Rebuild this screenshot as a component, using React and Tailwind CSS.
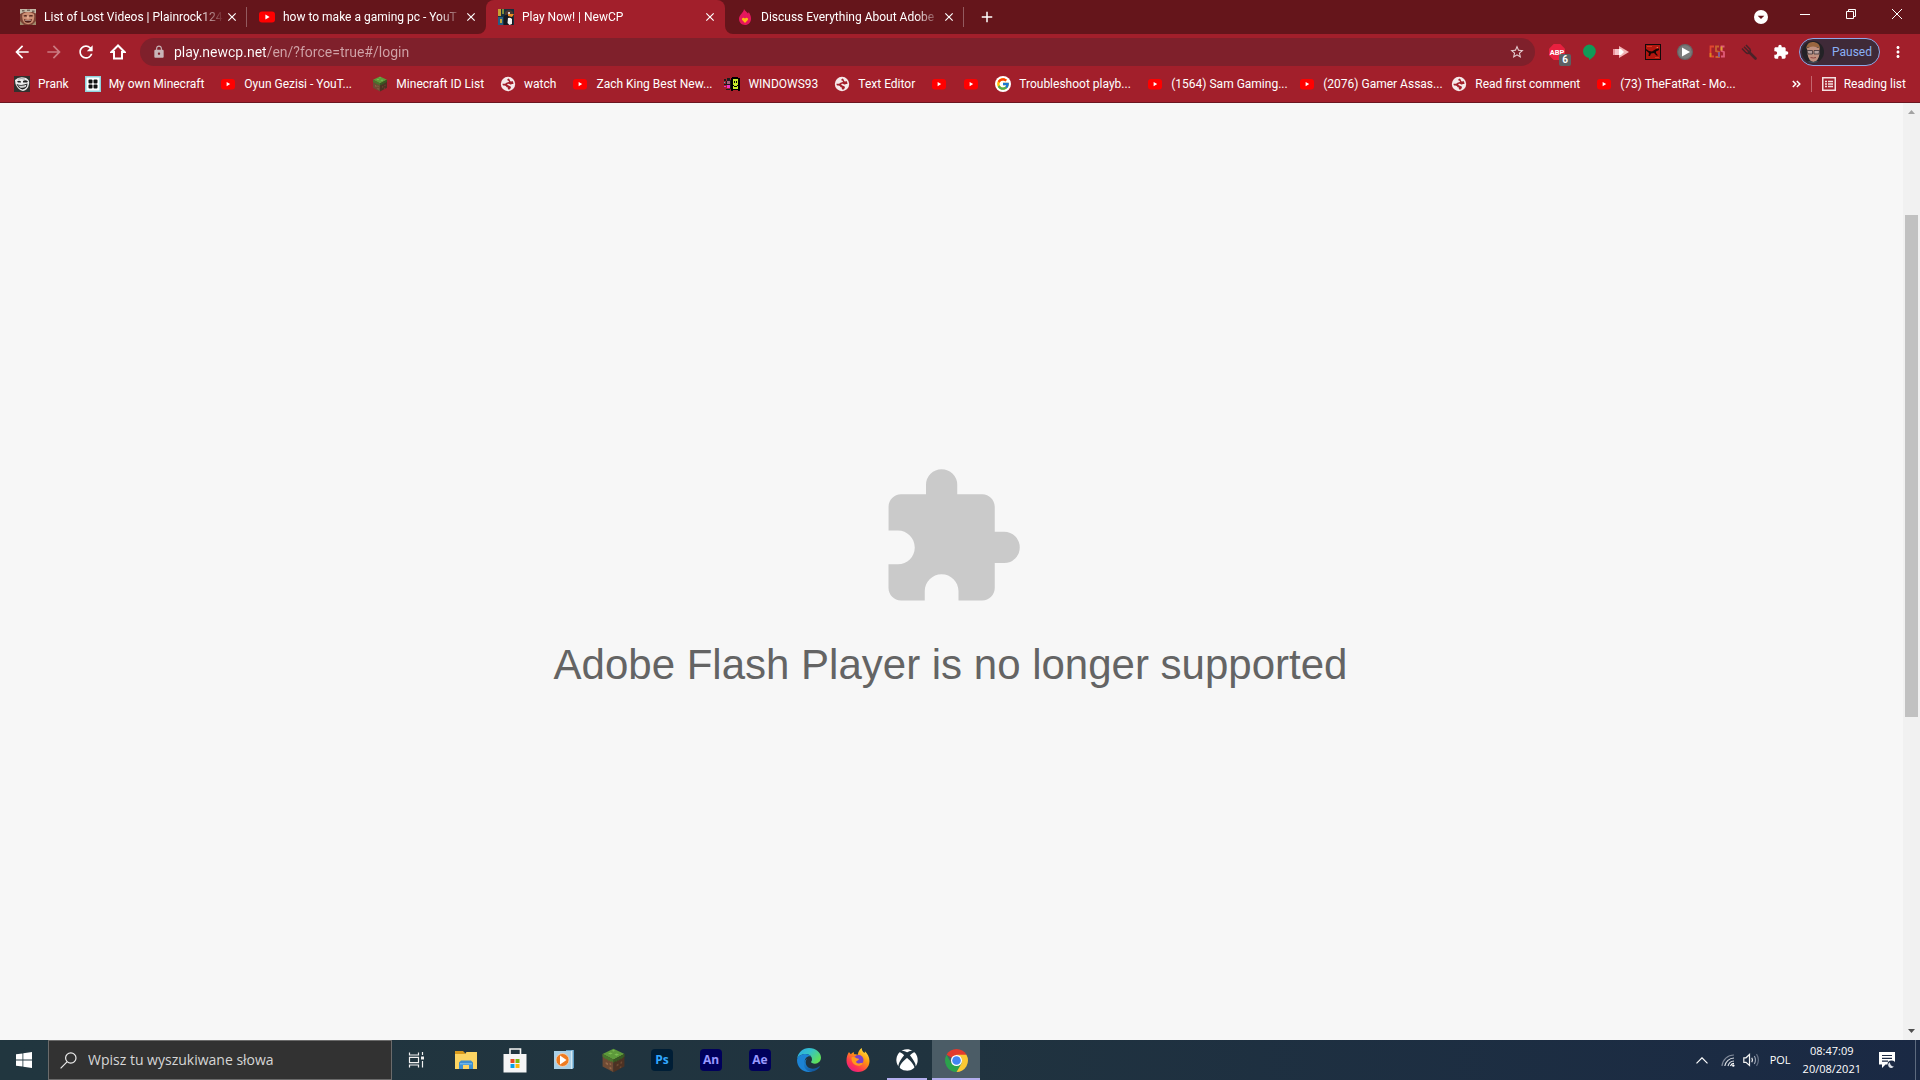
import React from 'react';
import {
  MdArrowBack,
  MdArrowForward,
  MdRefresh,
  MdLock,
  MdStarBorder,
  MdExtension,
  MdMoreVert,
  MdArrowDropDown,
  MdClose,
  MdAdd,
} from 'react-icons/md';
import { FaXbox } from 'react-icons/fa';
import { FcGoogle } from 'react-icons/fc';

/* Favicons, all on a 16px grid */

const YouTubeIcon = () => (
  <svg viewBox="0 0 16 16" className="size-4 shrink-0">
    <rect x="0" y="2.4" width="16" height="11.2" rx="3" fill="#ff0000" />
    <path d="M6.4 5.6v4.8L10.6 8z" fill="#fff" />
  </svg>
);

const YouTubeSmallIcon = () => (
  <svg viewBox="0 0 16 16" className="size-4 shrink-0">
    <rect x="1" y="3" width="14" height="10.4" rx="3" fill="#ff0000" />
    <path d="M6.6 6v4.2L10.2 8.1z" fill="#fff" />
  </svg>
);

const GlobeIcon = () => (
  <svg viewBox="0 0 16 16" className="size-4 shrink-0">
    <circle cx="8" cy="8" r="7.2" fill="#f6e9ea" />
    <path
      d="M8.8 2.4c-1.6.5-2 1.500-1 2.200 1 .5 1.700.7.8 1.500-.9.600-2 .3-2.800 1.100-.5.600-1.500.5-3.300.5 0 1 .3 1.500.7 1.900 1.600 0 2.600.1 3 .9.200.8.9.6 1.500 1.100.3.700-.2 1.600.6 2 .9 0 1.700-.4 2.200-1.200.5-.9.700-1.600-.2-2.100-1.100-.3-1.700-.9-2.700-1.300-.6-.4-.4-1.100.4-1.200 1-.1 1.500.5 2.300.6 1 .1 1.300-.5 2.100-.5h1.100c-.1-1.100-.4-2-1-2.800-.7.400-1.500.5-2 .1-.7-.6-.6-1.700-1.700-2.800z"
      fill="#a3202c"
    />
  </svg>
);

const FaceIcon = () => (
  <svg viewBox="0 0 16 16" className="size-4 shrink-0">
    <rect width="16" height="16" fill="#7b4335" />
    <path d="M0 0h16v4.500L13 3H4L0 5z" fill="#c4b7a6" />
    <path d="M2 1h2.500v1.500H2zM7 .5h3v1.500H7zM12 1.500h2.500V3H12z" fill="#77665a" />
    <path d="M2.500 5q5.500-4 11.500 0 1 5-1.500 8.500Q8 17 4 13.500 1.500 10 2.500 5z" fill="#cd8f74" />
    <path d="M3.500 6.500q2-1 3.500 0v1H4zM9 6.500q2-1 4 0l-.5 1H9z" fill="#4a2018" />
    <path d="M7 7h1.500l.8 2.500H6.500z" fill="#e2aa90" />
    <path d="M4 10q4 2 8 0l-1 3q-3 1.500-6 0z" fill="#501a16" />
    <path d="M5 10.700q3 1 6 0l-.5 1h-5z" fill="#e8d5c8" />
    <path d="M0 12l4 4H0zM16 12l-4 4h4z" fill="#a08a6c" />
  </svg>
);

const PenguinIcon = () => (
  <svg viewBox="0 0 16 16" className="size-4 shrink-0">
    <rect width="16" height="16" fill="#17303c" />
    <path d="M0 0h3v7H0z" fill="#c9a032" />
    <path d="M4 0h2v5H4z" fill="#7c8a3a" />
    <path d="M0 8h5v8H0z" fill="#275d83" />
    <path d="M2 10h2v4H2z" fill="#c2a43a" />
    <path d="M7 3q4-4 8 0v3H7z" fill="#4c3730" />
    <path d="M6 7q4-3 9 0v9H6z" fill="#14181f" />
    <path d="M10 9q2.500-1 4 1v5l-2.500 1-2-2z" fill="#f2f2f2" />
    <path d="M10 5h6l-2 3-4-1z" fill="#ec8a25" />
    <circle cx="11" cy="4" r="1" fill="#fff" />
  </svg>
);

const FlameIcon = () => (
  <svg viewBox="0 0 16 16" className="size-4 shrink-0">
    <path d="M7 0c1 2 2.500 2.800 4 4.500.4-.5.600-1 .6-1.500 1.500 2 2.400 4.200 2.400 6.500C14 13.500 11.500 16 8 16s-6-2.500-6-6.200C2 6 6.500 4 7 0z" fill="#e6175c" />
    <path d="M8 14l-2.800-3C4 9.300 6.500 7.800 8 9.500c1.500-1.700 4-.2 2.800 1.500z" fill="#fdb713" />
  </svg>
);

const TrollIcon = () => (
  <svg viewBox="0 0 16 16" className="size-4 shrink-0">
    <rect width="16" height="16" fill="#33302e" />
    <path d="M1 4Q5 0 12 2q4 2 3 6-1 6-6 7Q4 14 1.500 8z" fill="#ececec" />
    <path d="M3 5.500q2-1.500 4 0v1H4zM9 5q2.500-1.500 5 .5l-1 1H9z" fill="#222" />
    <path d="M2.500 8q5 2 11-.5 0 5-5 6-4-1-6-5.500z" fill="#222" />
    <path d="M4 9.200q4 1.500 8.500-.4l-1 2.200q-3.500 1.500-5.800.2z" fill="#f4f4f4" />
    <path d="M6 9.500v1.800M8 9.700v2M10 9.500v1.800" stroke="#444" strokeWidth=".4" />
    <path d="M4 3.200q3-1.400 7 0" stroke="#777" strokeWidth=".6" fill="none" />
  </svg>
);

const FourDotsIcon = () => (
  <svg viewBox="0 0 16 16" className="size-4 shrink-0">
    <rect width="16" height="16" fill="#8fd3dd" />
    <rect x="1.500" y="1.500" width="13" height="13" fill="#fff" />
    <rect x="3.500" y="3.500" width="4" height="4" rx="1" fill="#111" />
    <rect x="8.500" y="3.500" width="4" height="4" rx="1" fill="#111" />
    <rect x="3.500" y="8.500" width="4" height="4" rx="1" fill="#111" />
    <rect x="8.500" y="8.500" width="4" height="4" rx="1" fill="#111" />
  </svg>
);

const GrassBlockIcon = ({ className }) => (
  <svg viewBox="0 0 16 16" className={className}>
    <path d="M8 .5l7 3.300L8 7.500 1 3.800z" fill="#5d9a3b" />
    <path d="M1 3.800l7 3.700v8L1 11.800z" fill="#6f4b34" />
    <path d="M15 3.800L8 7.500v8l7-3.700z" fill="#4d3223" />
    <path d="M1 3.800l7 3.700v2l-1.500-1.300v1L5 7.400v1L3.500 6.500v1L1 5.500z" fill="#47782d" />
    <path d="M15 3.800L8 7.500v2l1.500-1.300v1L11 7.400v1l1.500-1.900v1L15 5.500z" fill="#365c22" />
    <path d="M3 9l1.500.8v1.300L3 10.300zM5.500 12l1.200.6v1.200l-1.200-.6zM5.500 9.500l1 .5v1l-1-.5z" fill="#95694a" />
    <path d="M10 10.500l1.200-.6v1.300l-1.200.6zM12.500 9l1-.5v1.300l-1 .5zM12 12l1-.5v1l-1 .5z" fill="#6e4a33" />
    <path d="M6 2.800l1.500.7-1.500.7-1.500-.7zM10 3.500l1.500.7-1.500.7-1.500-.7zM8 1.300l1 .5-1 .5-1-.5z" fill="#7abb50" />
  </svg>
);

const Windows93Icon = () => (
  <svg viewBox="0 0 16 16" className="size-4 shrink-0" shapeRendering="crispEdges">
    <path d="M8 1h6v1h2v13h-2v-1H9v1H7V2h1z" fill="#000" />
    <path d="M9 3h5v10H9z" fill="#c6ee2b" />
    <path d="M10 5h1v2h-1zM12 5h1v2h-1zM9 9h1v1H9zM13 9h1v1h-1zM10 10h3v1h-3z" fill="#000" />
    <path d="M0 3h2v2H0zM3 2h3v3H3zM2 5h1v3H2zM0 8h6v1H0zM2 13h4v1H2zM6 4h1v9H6z" fill="#1b1b1b" />
    <path d="M3 5h3v3H3z" fill="#a5607e" />
    <path d="M0 6h1v1H0z" fill="#39b6c8" />
    <path d="M3 9h3v3H3zM0 10h2v1H0z" fill="#f032c8" />
  </svg>
);

const GoogleIcon = () => (
  <span className="flex size-4 shrink-0 items-center justify-center rounded-full bg-white">
    <FcGoogle className="size-3.5" />
  </span>
);

/* Toolbar icons */

const HomeIcon = () => (
  <svg viewBox="0 0 16 16" className="size-4">
    <path d="M8 1.500L1.500 8H4v6.500h8V8h2.500z" fill="none" stroke="#fff" strokeWidth="2" />
  </svg>
);

const AbpIcon = () => (
  <span className="relative">
    <svg viewBox="0 0 16 16" className="size-4">
      <path d="M4.700 0h6.600L16 4.700v6.600L11.300 16H4.700L0 11.300V4.700z" fill="#e8203f" />
      <text x="8" y="10.500" textAnchor="middle" fontSize="7.500" fontWeight="700" fontFamily="Roboto, sans-serif" fill="#fff">ABP</text>
    </svg>
    <span className="absolute top-2.5 left-2.5 flex h-3 w-3 items-center justify-center rounded-xs bg-[#5c6063] text-[10px] leading-3 font-bold text-white">6</span>
  </span>
);

const BubbleIcon = () => (
  <svg viewBox="0 0 16 16" className="size-4">
    <path d="M8 .5a6.800 6.800 0 0 1 6.800 6.800c0 3.500-3 6.700-6.800 8.700v-2A6.800 6.800 0 0 1 8 .5z" fill="#109a58" />
  </svg>
);

const RecordIcon = () => (
  <svg viewBox="0 0 16 16" className="size-4">
    <path d="M0 5h2v6H0z" fill="#e8949b" />
    <path d="M2 5h5v6H2z" fill="#f6c5c9" />
    <path d="M6 2L16 8 6 14z" fill="#f2b3b5" />
    <path d="M6 5h2l3 3-3 3H6z" fill="#fff" />
  </svg>
);

const BeastIcon = () => (
  <svg viewBox="0 0 16 16" className="size-4">
    <rect width="16" height="16" fill="#12090a" />
    <rect x="1" y="1" width="14" height="14" fill="#b3160f" />
    <path d="M1 5l3 2 3 .5 4-2.500 3-.5v1.500l-3 1.500v1.500l2 2.500h-1.500L9 9 6 9.500 5 12H3.500l.5-3-3-2.500z" fill="#150606" />
    <path d="M2 2h5v1H2zM10 13h4v1h-4z" fill="#d43a20" />
    <path d="M11 4l2-1v1z" fill="#e7a46a" />
  </svg>
);

const PlayIcon = () => (
  <svg viewBox="0 0 16 16" className="size-4">
    <circle cx="8" cy="8" r="8" fill="#666" />
    <circle cx="8" cy="8" r="6.800" fill="#7b7b7b" />
    <path d="M5 3.500v9L13 8z" fill="#fff" />
  </svg>
);

const CssIcon = () => (
  <svg viewBox="0 0 16 16" className="size-4" fill="none" strokeWidth="1.800">
    <path d="M5 2.500H1.500v10H5" stroke="#e2452f" />
    <path d="M1.500 9v4" stroke="#d88a1e" />
    <path d="M10 2.500H7v4.500l3 1v5H6.500" stroke="#c9622f" />
    <path d="M10 8v5" stroke="#7f5a9c" />
    <path d="M15.500 2.500h-3v4.500l2.500 1v4.500h-3" stroke="#e05a78" />
    <path d="M12.500 2.500v4" stroke="#e0a030" />
  </svg>
);

const ForkIcon = () => (
  <svg viewBox="0 0 16 16" className="size-4" fill="none" stroke="#4a2228">
    <path d="M8 8l6.500 6.500" strokeWidth="2.600" strokeLinecap="round" />
    <path d="M1 4.500l4 4.200q2 1.500 3.500 0T9 5.200L5 1M3 2.700l5 5" strokeWidth="1.500" />
  </svg>
);

const Avatar = () => (
  <svg viewBox="0 0 22 22" className="size-[22px] rounded-full">
    <rect width="22" height="22" fill="#232226" />
    <path d="M4 8Q5 0 12 1q7 1 6 9l-2-4H6z" fill="#9a663f" />
    <path d="M5 7q6-3 12 0l.5 6q-1 7-6 8-5-1-6-8z" fill="#c0917f" />
    <path d="M5 9.500h5.500v3.500H6zM12 9.500h5.500L17 13h-5z" fill="#b6a09d" stroke="#3e3236" strokeWidth=".8" />
    <path d="M8.500 16.500q3 1 5.500 0" stroke="#8c4440" strokeWidth="1" fill="none" />
    <path d="M3 22q4-3 8-1 5-2 8 1z" fill="#45525e" />
  </svg>
);

const ReadingListIcon = () => (
  <svg viewBox="0 0 14 14" className="size-3.5" fill="none" stroke="#f3dfe1">
    <rect x=".75" y=".75" width="12.500" height="12.500" strokeWidth="1.500" />
    <path d="M3 4.500h2M3 7h2M3 9.500h2M6 4.500h5M6 7h5M6 9.500h5" strokeWidth="1.400" />
  </svg>
);

/* Taskbar icons */

const WindowsIcon = () => (
  <svg viewBox="0 0 16 16" className="size-4" fill="#fff">
    <path d="M0 2.300l6.500-.9v6.200H0zM7.300 1.300L16 0v7.600H7.300zM0 8.400h6.500v6.200L0 13.700zM7.300 8.400H16V16l-8.700-1.300z" />
  </svg>
);

const SearchIcon = () => (
  <svg viewBox="0 0 17 17" className="size-[17px]" fill="none" stroke="#ececec" strokeWidth="1.200">
    <circle cx="10.800" cy="6" r="5.200" />
    <path d="M7 9.800L.6 16.300" />
  </svg>
);

const TaskViewIcon = () => (
  <svg viewBox="0 0 17 16" className="h-4 w-[17px]" fill="none" stroke="#f1f1f1" strokeWidth="1.200">
    <path d="M1.500.5v2.500h9V.5M1.500 15.500V13h9v2.500M1.500 5.300h9v5.400h-9zM14.500 0v3M14.500 9v6.500" />
    <path d="M13 4.500h3v3h-3z" fill="#f1f1f1" stroke="none" />
  </svg>
);

const ExplorerIcon = () => (
  <svg viewBox="0 0 22 18" className="h-[18px] w-[22px]">
    <path d="M0 0h8l2 2v3H0z" fill="#d99a1c" />
    <path d="M0 3h10l1.500-2H22v17H0z" fill="#fcd462" />
    <path d="M4 18v-6.500L6 9.500h10l2 2V18h-4v-4H8v4z" fill="#3d8fd0" />
    <path d="M5 12h12v1.500H5z" fill="#6cb4e8" />
  </svg>
);

const StoreIcon = () => (
  <svg viewBox="0 0 24 25" className="h-[25px] w-6">
    <path d="M7 6V1h10.500v5" stroke="#f5f5f5" strokeWidth="1.600" fill="none" />
    <path d="M.5 6h23v18.500H.5z" fill="#f5f5f5" />
    <path d="M7.500 11h4v4h-4z" fill="#e64a24" />
    <path d="M12.500 11h4v4h-4z" fill="#7fb90b" />
    <path d="M7.500 16h4v4h-4z" fill="#05a0e8" />
    <path d="M12.500 16h4v4h-4z" fill="#fdb60a" />
  </svg>
);

const MediaPlayerIcon = () => (
  <svg viewBox="0 0 20 20" className="size-5">
    <path d="M12 0h8v18l-2 1H12z" fill="#5d9cc4" />
    <path d="M0 1h17v18H0z" fill="#a9cfe6" />
    <path d="M17 1l1.500-1v19L17 19z" fill="#d4e9f4" />
    <circle cx="8.500" cy="10" r="6.500" fill="#ee7b21" stroke="#f7d6b8" strokeWidth=".8" />
    <path d="M6 5.500v9L12.500 10z" fill="#fff" />
  </svg>
);

const AdobeTile = ({ label, className }) => (
  <span className={`flex h-[22px] w-[22px] items-center justify-center rounded-sm text-[12px] leading-3 font-bold ${className}`}>
    {label}
  </span>
);

const EdgeIcon = () => (
  <svg viewBox="0 0 24 24" className="size-6">
    <defs>
      <linearGradient id="edgeTop" x1="0" y1="0" x2="1" y2="0.600">
        <stop offset="0" stopColor="#2aa7e8" />
        <stop offset=".5" stopColor="#35c1c9" />
        <stop offset="1" stopColor="#5fe05a" />
      </linearGradient>
      <linearGradient id="edgeBottom" x1="0" y1="0" x2="1" y2="1">
        <stop offset="0" stopColor="#1a8bdc" />
        <stop offset="1" stopColor="#114a8b" />
      </linearGradient>
    </defs>
    <path d="M.1 11C.8 4.500 6 0 12 0c7 0 12 4.900 12 9.600 0 3.600-2.700 6.100-6 6.100-2.400 0-4-.8-4-1.600 0-.6 1-1 1-2.900C15 8.600 12.600 6 8.600 6 4 6 .9 8.500.1 11z" fill="url(#edgeTop)" />
    <path d="M0 12C.3 8.500 4 6 8.600 6c2.700 0 4.600 1.200 5.600 2.700-3.200-1.400-6.500 1.300-6.500 5.300 0 4.500 4 8.600 9.500 7.500-1.600 1.400-3.200 2.300-5.400 2.500C5 24 0 18.800 0 12z" fill="#1c83d4" />
    <path d="M10.200 10.500c-3 3.500-1.400 8.500 3 9.800 3.500 1 7-.3 8.800-1.800.5-.4 1 0 .7.500-1.900 2.600-4.500 4.100-7.200 4.600-5.500.7-9.700-4-8.300-9 .5-1.900 1.700-3.200 3-4.100z" fill="url(#edgeBottom)" />
  </svg>
);

const FirefoxIcon = () => (
  <svg viewBox="0 0 24 24" className="size-6">
    <defs>
      <linearGradient id="foxBody" x1="0.900" y1="0" x2="0.200" y2="1">
        <stop offset="0" stopColor="#fff14a" />
        <stop offset=".4" stopColor="#ff980e" />
        <stop offset=".75" stopColor="#ff3750" />
        <stop offset="1" stopColor="#e6178c" />
      </linearGradient>
    </defs>
    <path d="M3 4c.5 1 1.200 1.800 2 2.300.6-1 1.600-1.900 2.800-2.300-.2.800 0 1.600.5 2.300 1.500-.2 2.600 0 3.500.5C12 4 13.500 1.500 15.800 0c0 2.500 1 3.500 2.700 5 .3-.4.5-1 .4-1.800C21.500 5.500 23.500 9 23.500 13 23.500 19.400 18.400 24 12 24S.5 19.200.5 12.500C.5 9 1.500 6 3 4z" fill="url(#foxBody)" />
    <circle cx="12.500" cy="12" r="5" fill="#7a41c9" />
    <path d="M5.500 9.500c2-.8 3.700-.3 5 .8 1 .3 2.400.2 2.400.9-.2 1.200-2.300 1.200-2.700 2.300-.2 1.500 1.600 2.500 3.600 1.800 2-.7 3-.2 2.600.6-1.200 1.600-4 2.300-6.400 1.300C7 16 5.200 13 5.500 9.500z" fill="#ff9a1c" />
  </svg>
);

const ChromeIcon = () => (
  <svg viewBox="0 0 24 24" className="size-[23px]">
    <path d="M12 12L1.610 6A12 12 0 0 1 22.390 6z" fill="#e33b2e" />
    <path d="M1.610 6A12 12 0 0 0 12 24l5.200-9L12 12 6.800 15z" fill="#2ba24c" />
    <path d="M22.390 6A12 12 0 0 1 12 24l5.200-9L17.200 9 12 6.500V6z" fill="#fcc934" />
    <circle cx="12" cy="12" r="5.800" fill="#fff" />
    <circle cx="12" cy="12" r="4.500" fill="#4285f4" />
  </svg>
);

const WifiIcon = () => (
  <svg viewBox="0 0 14 14" className="size-3.5" fill="none" strokeWidth="1.200">
    <path d="M1 13A12 12 0 0 1 13 2" stroke="#7f8898" />
    <path d="M3.800 13A9.500 9.500 0 0 1 13 5M7 13a6.500 6.500 0 0 1 6-5" stroke="#d8dce2" />
    <path d="M9.500 13a4 4 0 0 1 3.500-2.600" stroke="#fff" />
    <circle cx="12.300" cy="12.600" r="1.200" fill="#fff" />
  </svg>
);

const VolumeIcon = () => (
  <svg viewBox="0 0 17 14" className="h-3.5 w-[17px]" fill="none" stroke="#f2f2f2" strokeWidth="1.200">
    <path d="M.8 4.800H3L6.500 1.500v11L3 9.300H.8z" />
    <path d="M8.800 4.800q1.300 2.200 0 4.400" />
    <path d="M11.300 3q2.400 4 0 8" stroke="#9aa3b3" />
    <path d="M13.500 1.200q3.800 5.800 0 11.600" stroke="#657084" />
  </svg>
);

const NotificationIcon = () => (
  <svg viewBox="0 0 17 17" className="size-[17px]">
    <path d="M0 0h16v12.500H6.500L3 16v-3.500H0z" fill="#fff" />
    <path d="M3 3.500h10M3 6.300h10M3 9.100h6" stroke="#1c2a44" strokeWidth="1.200" />
    <circle cx="12.500" cy="12.500" r="4" fill="#1c2a44" />
    <path d="M11 10.200a3 3 0 1 0 3.800 4.200A3.800 3.800 0 0 1 11 10.200z" fill="#dfe3ea" />
  </svg>
);

const tabs = [
  { title: 'List of Lost Videos | Plainrock124', icon: <FaceIcon />, separator: true },
  { title: 'how to make a gaming pc - YouT', icon: <YouTubeIcon /> },
  { title: 'Play Now! | NewCP', icon: <PenguinIcon />, active: true },
  { title: 'Discuss Everything About Adobe', icon: <FlameIcon />, separator: true },
];

const bookmarks = [
  { title: 'Prank', icon: <TrollIcon /> },
  { title: 'My own Minecraft', icon: <FourDotsIcon /> },
  { title: 'Oyun Gezisi - YouT...', icon: <YouTubeSmallIcon />, long: true },
  { title: 'Minecraft ID List', icon: <GrassBlockIcon className="size-4 shrink-0" /> },
  { title: 'watch', icon: <GlobeIcon /> },
  { title: 'Zach King Best New...', icon: <YouTubeSmallIcon />, long: true },
  { title: 'WINDOWS93', icon: <Windows93Icon /> },
  { title: 'Text Editor', icon: <GlobeIcon /> },
  { title: '', icon: <YouTubeSmallIcon /> },
  { title: '', icon: <YouTubeSmallIcon /> },
  { title: 'Troubleshoot playb...', icon: <GoogleIcon />, long: true },
  { title: '(1564) Sam Gaming...', icon: <YouTubeSmallIcon />, long: true },
  { title: '(2076) Gamer Assas...', icon: <YouTubeSmallIcon />, long: true },
  { title: 'Read first comment', icon: <GlobeIcon /> },
  { title: '(73) TheFatRat - Mo...', icon: <YouTubeSmallIcon />, long: true },
];

const extensions = [
  { name: 'Adblock Plus', icon: <AbpIcon /> },
  { name: 'Hangouts', icon: <BubbleIcon /> },
  { name: 'Recorder', icon: <RecordIcon /> },
  { name: 'Beast', icon: <BeastIcon /> },
  { name: 'Player', icon: <PlayIcon /> },
  { name: 'CSS', icon: <CssIcon /> },
  { name: 'Fork', icon: <ForkIcon /> },
  { name: 'Extensions', icon: <MdExtension className="size-4 text-white" /> },
];

const apps = [
  { name: 'File Explorer', icon: <ExplorerIcon /> },
  { name: 'Microsoft Store', icon: <StoreIcon /> },
  { name: 'Media Player', icon: <MediaPlayerIcon /> },
  { name: 'Minecraft', icon: <GrassBlockIcon className="size-[25px]" /> },
  { name: 'Photoshop', icon: <AdobeTile label="Ps" className="bg-[#001e36] text-[#31a8ff]" /> },
  { name: 'Animate', icon: <AdobeTile label="An" className="bg-[#00005b] text-[#9999ff]" /> },
  { name: 'After Effects', icon: <AdobeTile label="Ae" className="bg-[#00005b] text-[#9999ff]" /> },
  { name: 'Edge', icon: <EdgeIcon /> },
  { name: 'Firefox', icon: <FirefoxIcon /> },
  { name: 'Xbox', icon: <FaXbox className="size-[22px] text-white" />, running: true },
  { name: 'Chrome', icon: <ChromeIcon />, active: true },
];

const Tab = ({ tab }) => (
  <div
    className={`relative flex h-full w-[239px] min-w-0 items-center pr-[7px] pl-3 ${
      tab.active ? 'rounded-t-lg bg-[#a21f2b]' : ''
    }`}
  >
    {tab.active && (
      <>
        <svg viewBox="0 0 8 8" className="absolute bottom-0 -left-2 size-2" fill="#a21f2b">
          <path d="M8 0v8H0a8 8 0 0 0 8-8z" />
        </svg>
        <svg viewBox="0 0 8 8" className="absolute -right-2 bottom-0 size-2" fill="#a21f2b">
          <path d="M0 0v8h8a8 8 0 0 1-8-8z" />
        </svg>
      </>
    )}
    {tab.icon}
    <span className="ml-2 flex-1 whitespace-nowrap [mask-image:linear-gradient(to_right,black_86%,transparent)]">
      {tab.title}
    </span>
    <button aria-label="Close tab" className="flex size-4 shrink-0 items-center justify-center">
      <MdClose className="size-3.5" />
    </button>
    {tab.separator && <span className="absolute right-0 h-5 w-px bg-[#935a5f]" />}
  </div>
);

const TitleBar = () => (
  <div className="flex h-[34px] bg-[#65151b] pl-2">
    {tabs.map((tab) => (
      <Tab key={tab.title} tab={tab} />
    ))}
    <button aria-label="New tab" className="flex w-[46px] items-center justify-center">
      <MdAdd className="size-[18px]" />
    </button>
    <div className="ml-auto flex h-7">
      <button aria-label="Search tabs" className="flex w-[42px] items-end justify-center">
        <span className="mb-1 flex size-3.5 items-center justify-center rounded-full bg-white text-[#65151b]">
          <MdArrowDropDown className="size-4 shrink-0" />
        </span>
      </button>
      <button aria-label="Minimize" className="flex w-[46px] items-center justify-center">
        <svg viewBox="0 0 10 10" className="size-2.5" stroke="#fff" fill="none">
          <path d="M0 5.500h10" />
        </svg>
      </button>
      <button aria-label="Restore" className="flex w-[46px] items-center justify-center">
        <svg viewBox="0 0 10 10" className="size-2.5" stroke="#fff" fill="none">
          <path d="M.5 2.500h7v7h-7zM2.500 2.500v-2h7v7h-2" />
        </svg>
      </button>
      <button aria-label="Close" className="flex w-[46px] items-center justify-center">
        <svg viewBox="0 0 10 10" className="size-2.5" stroke="#fff" fill="none">
          <path d="M0 0l10 10M10 0L0 10" />
        </svg>
      </button>
    </div>
  </div>
);

const Toolbar = () => (
  <div className="flex h-9 items-center pr-3 pl-1.5">
    <button aria-label="Back" className="flex w-8 justify-center"><MdArrowBack className="size-5" /></button>
    <button aria-label="Forward" className="flex w-8 justify-center text-[#cb7b82]"><MdArrowForward className="size-5" /></button>
    <button aria-label="Reload" className="flex w-8 justify-center"><MdRefresh className="size-5" /></button>
    <button aria-label="Home" className="flex w-8 justify-center"><HomeIcon /></button>
    <div className="ml-1.5 flex h-7 flex-1 items-center rounded-full bg-[#7f202b] pr-2.5 pl-3">
      <MdLock className="size-3.5 shrink-0 text-[#c9b6b9]" />
      <input
        aria-label="Address"
        defaultValue="play.newcp.net/en/?force=true#/login"
        className="ml-2 flex-1 bg-[linear-gradient(to_right,white_92px,#d0a3a8_92px)] bg-clip-text text-sm text-transparent outline-none"
      />
      <button aria-label="Bookmark this page"><MdStarBorder className="size-4 text-[#e6cfd2]" /></button>
    </div>
    <div className="ml-1.5 flex items-center">
      {extensions.map((ext) => (
        <button key={ext.name} aria-label={ext.name} className="flex w-8 items-center justify-center">
          {ext.icon}
        </button>
      ))}
    </div>
    <button className="ml-0.5 flex h-7 w-[81px] items-center rounded-full border border-[#8fa9e8] bg-[#3f2a38] pl-0.5 text-[#8ab0f5]">
      <Avatar />
      <span className="ml-2">Paused</span>
    </button>
    <button aria-label="Menu" className="ml-2 flex w-5 justify-center"><MdMoreVert className="size-[18px]" /></button>
  </div>
);

const BookmarksBar = () => (
  <div className="flex h-[33px] items-start border-b border-[#6b1620] pr-3.5 pl-3.5">
    <nav className="flex h-7 min-w-0 items-center gap-4">
      {bookmarks.map((b, i) => (
        <a key={i} href="#" className="flex items-center gap-2 whitespace-nowrap">
          {b.icon}
          {b.title && <span className={b.long ? 'w-28' : ''}>{b.title}</span>}
        </a>
      ))}
    </nav>
    <div className="ml-auto flex h-7 items-center">
      <button aria-label="More bookmarks">
        <svg viewBox="0 0 9 8" className="h-2 w-[9px]" fill="none" stroke="#fff" strokeWidth="1.500">
          <path d="M.8 1l3 3-3 3M4.800 1l3 3-3 3" />
        </svg>
      </button>
      <span className="mx-2.5 h-4 w-px bg-[#c4666e]" />
      <button className="flex items-center gap-2">
        <ReadingListIcon />
        Reading list
      </button>
    </div>
  </div>
);

const Scrollbar = () => (
  <div className="flex w-[17px] flex-col items-center bg-[#f1f1f1]">
    <svg viewBox="0 0 17 17" className="size-[17px]"><path d="M5 11h7L8.500 7z" fill="#a3a3a3" /></svg>
    <div className="flex w-full flex-1 flex-col items-center">
      <div className="flex-[95]" />
      <div className="w-[13px] flex-[502] bg-[#c1c1c1]" />
      <div className="flex-[306]" />
    </div>
    <svg viewBox="0 0 17 17" className="size-[17px]"><path d="M5 6h7L8.500 10z" fill="#505050" /></svg>
  </div>
);

const Taskbar = () => (
  <footer className="flex h-10 shrink-0 bg-linear-to-r from-[#21363f] via-[#20333f] to-[#1a2944] font-['Open_Sans',sans-serif] text-white">
    <button aria-label="Start" className="flex w-12 items-center justify-center"><WindowsIcon /></button>
    <label className="flex w-[344px] items-center border border-[#6b6b6b] bg-[#323232] pl-[11px]">
      <SearchIcon />
      <input
        aria-label="Wpisz tu wyszukiwane słowa"
        placeholder="Wpisz tu wyszukiwane słowa"
        className="ml-[11px] min-w-0 flex-1 text-sm outline-none placeholder:text-[#d6d6d6]"
      />
    </label>
    <button aria-label="Task view" className="flex w-12 items-center justify-center"><TaskViewIcon /></button>
    <div className="ml-0.5 flex gap-px">
      {apps.map((app) => (
        <button
          key={app.name}
          aria-label={app.name}
          className={`relative flex w-12 items-center justify-center ${app.active ? 'bg-[#4b5c66]' : ''}`}
        >
          {app.icon}
          {app.active && <span className="absolute inset-x-0 bottom-0 h-0.5 bg-[#b3aeee]" />}
          {app.running && <span className="absolute inset-x-1 bottom-0 h-0.5 bg-[#b3aeee]" />}
        </button>
      ))}
    </div>
    <div className="ml-auto flex items-center">
      <button aria-label="Show hidden icons" className="mr-[13px]">
        <svg viewBox="0 0 12 7" className="h-[7px] w-3" fill="none" stroke="#fff" strokeWidth="1.200">
          <path d="M.5 6.300L6 .8l5.500 5.500" />
        </svg>
      </button>
      <button aria-label="Network" className="mr-2"><WifiIcon /></button>
      <button aria-label="Volume" className="mr-2.5"><VolumeIcon /></button>
      <button className="mr-3 text-[11px]">POL</button>
      <div className="mr-[18px] flex flex-col items-center text-[11px] leading-[18px]">
        <span>08:47:09</span>
        <span>20/08/2021</span>
      </div>
      <button aria-label="Notifications" className="mr-[19px]"><NotificationIcon /></button>
      <span className="mr-1 h-10 w-px bg-[#5d6a7e]" />
    </div>
  </footer>
);

export default function App() {
  return (
    <div className="flex h-screen flex-col overflow-hidden font-['Roboto','Open_Sans',sans-serif] text-[12px]">
      <header className="shrink-0 bg-[#a21f2b] text-white">
        <TitleBar />
        <Toolbar />
        <BookmarksBar />
      </header>
      <div className="flex flex-1">
        <main className="flex flex-1 flex-col items-center justify-center bg-[#f7f7f7] pt-2 pr-0.5">
          <MdExtension className="size-[150px] text-[#cacaca]" />
          <h1 className="mt-7 font-['Liberation_Sans',Arial,sans-serif] text-[42px] leading-[48px] text-[#646464]">
            Adobe Flash Player is no longer supported
          </h1>
        </main>
        <Scrollbar />
      </div>
      <Taskbar />
    </div>
  );
}
